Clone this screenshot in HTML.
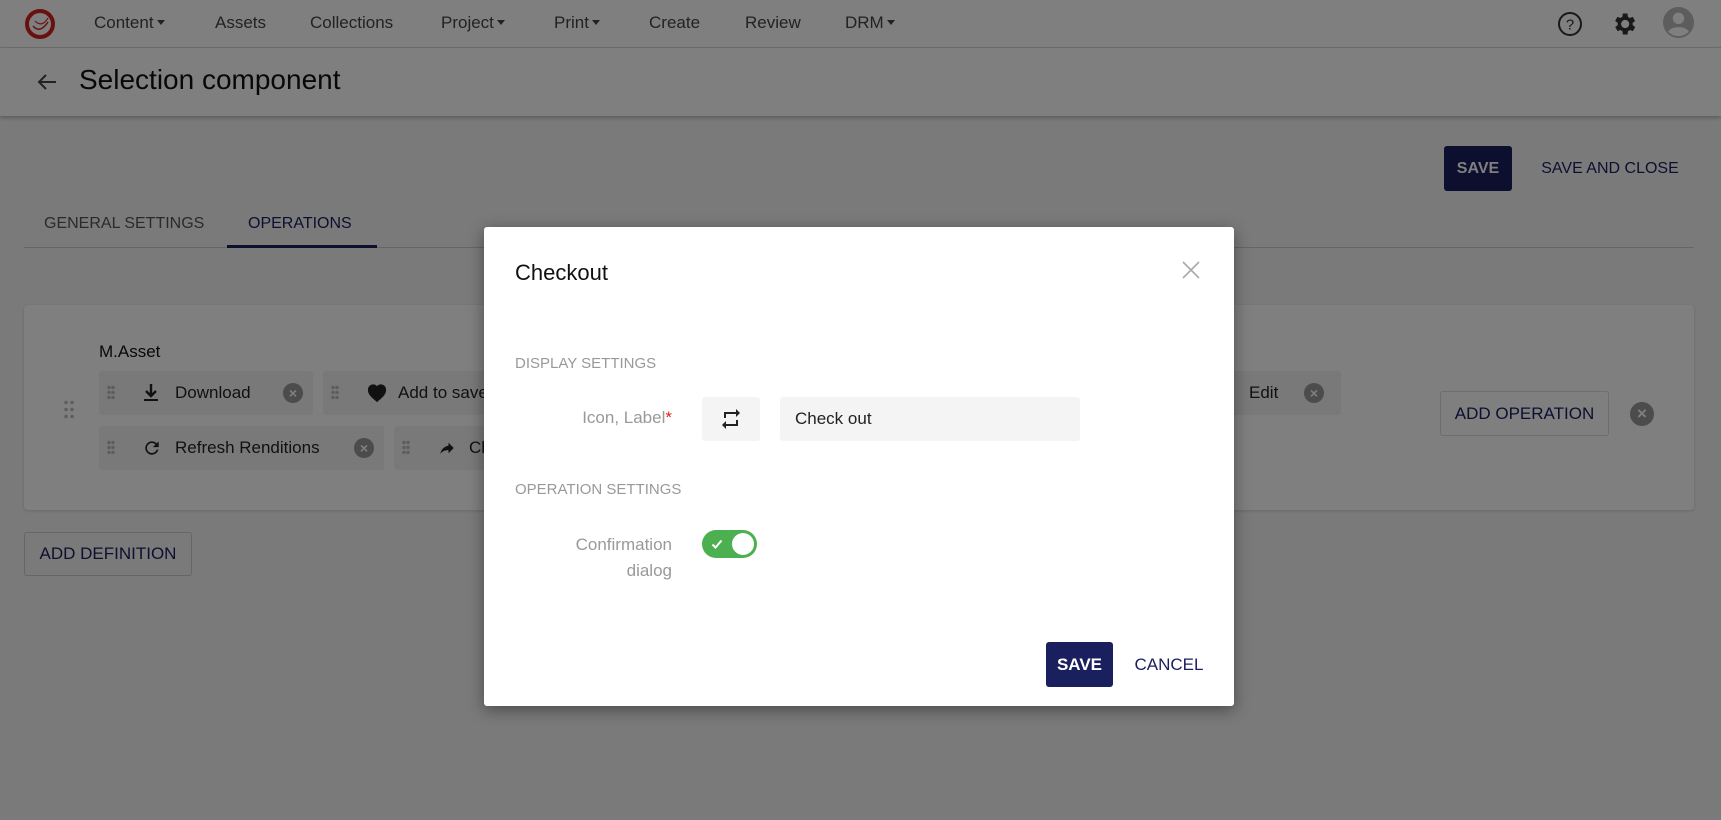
<!DOCTYPE html>
<html><head><meta charset="utf-8"><style>
*{box-sizing:border-box;margin:0;padding:0}
body{width:1721px;height:820px;overflow:hidden;position:relative;background:#f5f5f5;font-family:"Liberation Sans",sans-serif;color:#222}
.abs{position:absolute}
.nav{left:0;top:0;width:1721px;height:48px;background:#fff;border-bottom:1px solid #ddd}
.nav>span{position:absolute;top:13px;font-size:17px;color:#444}
.car{display:inline-block;width:0;height:0;border-left:4px solid transparent;border-right:4px solid transparent;border-top:5px solid #444;vertical-align:3px;margin-left:3px}
.tb{left:0;top:48px;width:1721px;height:68px;background:#fff;box-shadow:0 2px 4px rgba(0,0,0,.25)}
.btn{position:absolute;display:flex;align-items:center;justify-content:center;font-size:16px}
.card{left:24px;top:305px;width:1670px;height:205px;background:#fff;border-radius:4px;box-shadow:0 1px 3px rgba(0,0,0,.15)}
.chip{position:absolute;height:44px;background:#f2f2f2;border-radius:3px;font-size:17px;color:#222;display:flex;align-items:center}
.dots{position:absolute;left:8px;top:14px;width:8px;height:14px;background:radial-gradient(circle,#bbb 1.5px,transparent 2px) 0 0/4px 5px}
.xc{position:absolute;width:20px;height:20px;border-radius:50%;background:#999;color:#fff;font-size:14px;font-weight:bold;line-height:20px;text-align:center}
.ov{left:0;top:0;width:1721px;height:820px;background:rgba(0,0,0,.5)}
.modal{left:484px;top:227px;width:750px;height:479px;background:#fff;border-radius:3px;box-shadow:0 4px 16px rgba(0,0,0,.4)}
.sec{position:absolute;left:31px;font-size:15px;color:#999}
.lbl{position:absolute;right:562px;font-size:17px;color:#999;text-align:right;line-height:26px}
</style></head><body>
<div class="abs nav">
 <svg class="abs" style="left:24px;top:8px" width="32" height="32" viewBox="0 0 32 32"><circle cx="16" cy="16" r="13" fill="none" stroke="#d42020" stroke-width="4"/><path d="M9 18 Q16 26 24 14" fill="none" stroke="#d42020" stroke-width="1.5"/><path d="M11 13 Q18 20 24 10" fill="none" stroke="#d42020" stroke-width="1.2"/></svg>
 <span style="left:94px">Content<i class="car"></i></span>
 <span style="left:215px">Assets</span>
 <span style="left:310px">Collections</span>
 <span style="left:441px">Project<i class="car"></i></span>
 <span style="left:554px">Print<i class="car"></i></span>
 <span style="left:649px">Create</span>
 <span style="left:745px">Review</span>
 <span style="left:845px">DRM<i class="car"></i></span>
 <svg class="abs" style="left:1557px;top:11px" width="26" height="26" viewBox="0 0 26 26"><circle cx="13" cy="13" r="11" fill="none" stroke="#333" stroke-width="2"/><text x="13" y="18.5" font-size="15" text-anchor="middle" fill="#333" font-family="Liberation Sans">?</text></svg>
 <svg class="abs" style="left:1610px;top:10px" width="28" height="28" viewBox="0 0 24 24"><path fill="#333" d="M19.4 13a7.5 7.5 0 0 0 0-2l2.1-1.6-2-3.5-2.5 1a7 7 0 0 0-1.7-1L15 3h-4l-.4 2.9a7 7 0 0 0-1.7 1l-2.5-1-2 3.5L6.6 11a7.5 7.5 0 0 0 0 2l-2.1 1.6 2 3.5 2.5-1a7 7 0 0 0 1.7 1L11 21h4l.4-2.9a7 7 0 0 0 1.7-1l2.5 1 2-3.5zM13 15.5a3.5 3.5 0 1 1 0-7 3.5 3.5 0 0 1 0 7z"/></svg>
 <svg class="abs" style="left:1663px;top:7px" width="31" height="31" viewBox="0 0 30 30"><circle cx="15" cy="15" r="15" fill="#bbb"/><circle cx="15" cy="11" r="5.5" fill="#fff"/><path d="M5 24c3-6 17-6 20 0a14 14 0 0 1-20 0z" fill="#fff"/></svg>
</div>
<div class="abs tb">
 <svg class="abs" style="left:36px;top:24px" width="22" height="20" viewBox="0 0 22 20"><path d="M20 10H3M10 3L3 10l7 7" fill="none" stroke="#444" stroke-width="2"/></svg>
 <span class="abs" style="left:79px;top:16px;font-size:28px;color:#111">Selection component</span>
</div>
<div class="btn" style="left:1444px;top:146px;width:68px;height:45px;background:#1a1f5e;color:#fff;font-weight:bold;border-radius:3px">SAVE</div>
<div class="btn" style="left:1535px;top:146px;width:150px;height:45px;color:#1a1f5e">SAVE AND CLOSE</div>
<div class="abs" style="left:24px;top:247px;width:1670px;height:1px;background:#ccc"></div>
<span class="abs" style="left:44px;top:215px;font-size:16px;color:#555">GENERAL SETTINGS</span>
<span class="abs" style="left:248px;top:215px;font-size:16px;color:#1a1f5e">OPERATIONS</span>
<div class="abs" style="left:227px;top:245px;width:150px;height:3px;background:#1a1f5e"></div>
<div class="abs card">
 <div class="dots" style="left:39px;top:94px;width:12px;height:20px;background-size:6px 7px"></div>
 <span class="abs" style="left:75px;top:37px;font-size:17px;color:#111">M.Asset</span>
 <div class="chip" style="left:75px;top:66px;width:214px"><div class="dots"></div><svg class="abs" style="left:43px;top:12px" width="18" height="20" viewBox="0 0 18 20"><path d="M9 1v11M4 8l5 5 5-5" fill="none" stroke="#222" stroke-width="2.4"/><path d="M2 17h14" stroke="#222" stroke-width="2"/></svg><span style="position:absolute;left:76px">Download</span><div class="xc" style="left:184px;top:12px">×</div></div>
 <div class="chip" style="left:299px;top:66px;width:250px"><div class="dots"></div><svg class="abs" style="left:43px;top:12px" width="22" height="20" viewBox="0 0 24 22"><path fill="#222" d="M12 21l-1.5-1.3C5 15 2 12 2 7.5 2 4 4.5 1.5 8 1.5c1.7 0 3 .8 4 2 1-1.2 2.3-2 4-2 3.5 0 6 2.5 6 6 0 4.5-3 7.5-8.5 12.2z"/></svg><span style="position:absolute;left:75px">Add to saved</span></div>
 <div class="chip" style="left:75px;top:121px;width:285px"><div class="dots"></div><svg class="abs" style="left:43px;top:12px" width="20" height="20" viewBox="0 0 24 24"><path fill="#222" d="M17.6 6.4A8 8 0 1 0 19.7 14h-2.1a6 6 0 1 1-1.4-6.2L13 11h7V4z"/></svg><span style="position:absolute;left:76px">Refresh Renditions</span><div class="xc" style="left:255px;top:12px">×</div></div>
 <div class="chip" style="left:370px;top:121px;width:200px"><div class="dots"></div><svg class="abs" style="left:43px;top:13px" width="20" height="18" viewBox="0 0 24 24"><path fill="#222" d="M14 5v4C7 10 4 15 3 20c2.5-3.5 6-5.1 11-5.1V19l7-7z"/></svg><span style="position:absolute;left:75px">Check out</span></div>
 <div class="chip" style="left:1180px;top:66px;width:137px"><span style="position:absolute;left:45px">Edit</span><div class="xc" style="left:100px;top:12px">×</div></div>
 <div class="btn" style="left:1416px;top:86px;width:169px;height:45px;border:1px solid #ddd;border-radius:3px;color:#1a1f5e;font-size:17px">ADD OPERATION</div>
 <div class="xc" style="left:1606px;top:97px;width:24px;height:24px;line-height:24px;font-size:17px">×</div>
</div>
<div class="btn" style="left:24px;top:532px;width:168px;height:44px;border:1px solid #ccc;border-radius:3px;color:#1a1f5e;font-size:17px;background:#f5f5f5">ADD DEFINITION</div>
<div class="abs ov"></div>
<div class="abs modal">
 <span class="abs" style="left:31px;top:33px;font-size:22px;color:#111">Checkout</span>
 <svg class="abs" style="left:697px;top:33px" width="20" height="20" viewBox="0 0 20 20"><path d="M2 2L18 18M18 2L2 18" stroke="#aaa" stroke-width="1.6"/></svg>
 <div class="sec" style="top:128px">DISPLAY SETTINGS</div>
 <div class="lbl" style="top:178px">Icon, Label<span style="color:#e02020">*</span></div>
 <div class="abs" style="left:218px;top:170px;width:58px;height:44px;background:#f4f4f4;border-radius:3px"><svg class="abs" style="left:17px;top:10px" width="24" height="24" viewBox="0 0 24 24"><path fill="#222" d="M7 7h10v3l4-4-4-4v3H5v6h2zm10 10H7v-3l-4 4 4 4v-3h12v-6h-2z"/></svg></div>
 <div class="abs" style="left:296px;top:170px;width:300px;height:44px;background:#f4f4f4;border-radius:3px;font-size:17px;color:#222;padding:12px 0 0 15px">Check out</div>
 <div class="sec" style="top:254px">OPERATION SETTINGS</div>
 <div class="lbl" style="top:305px">Confirmation<br>dialog</div>
 <div class="abs" style="left:218px;top:303px;width:55px;height:28px;background:#4caf50;border-radius:14px"><svg class="abs" style="left:9px;top:8px" width="12" height="12" viewBox="0 0 12 12"><path d="M1.5 6.5l3 3 6-7" fill="none" stroke="#fff" stroke-width="2"/></svg><div class="abs" style="right:3px;top:3px;width:22px;height:22px;border-radius:50%;background:#fff"></div></div>
 <div class="btn" style="left:562px;top:415px;width:67px;height:45px;background:#1a1f5e;color:#fff;font-weight:bold;border-radius:3px;font-size:17px">SAVE</div>
 <div class="btn" style="left:645px;top:415px;width:80px;height:45px;color:#1a1f5e;font-size:17px">CANCEL</div>
</div>
</body></html>
